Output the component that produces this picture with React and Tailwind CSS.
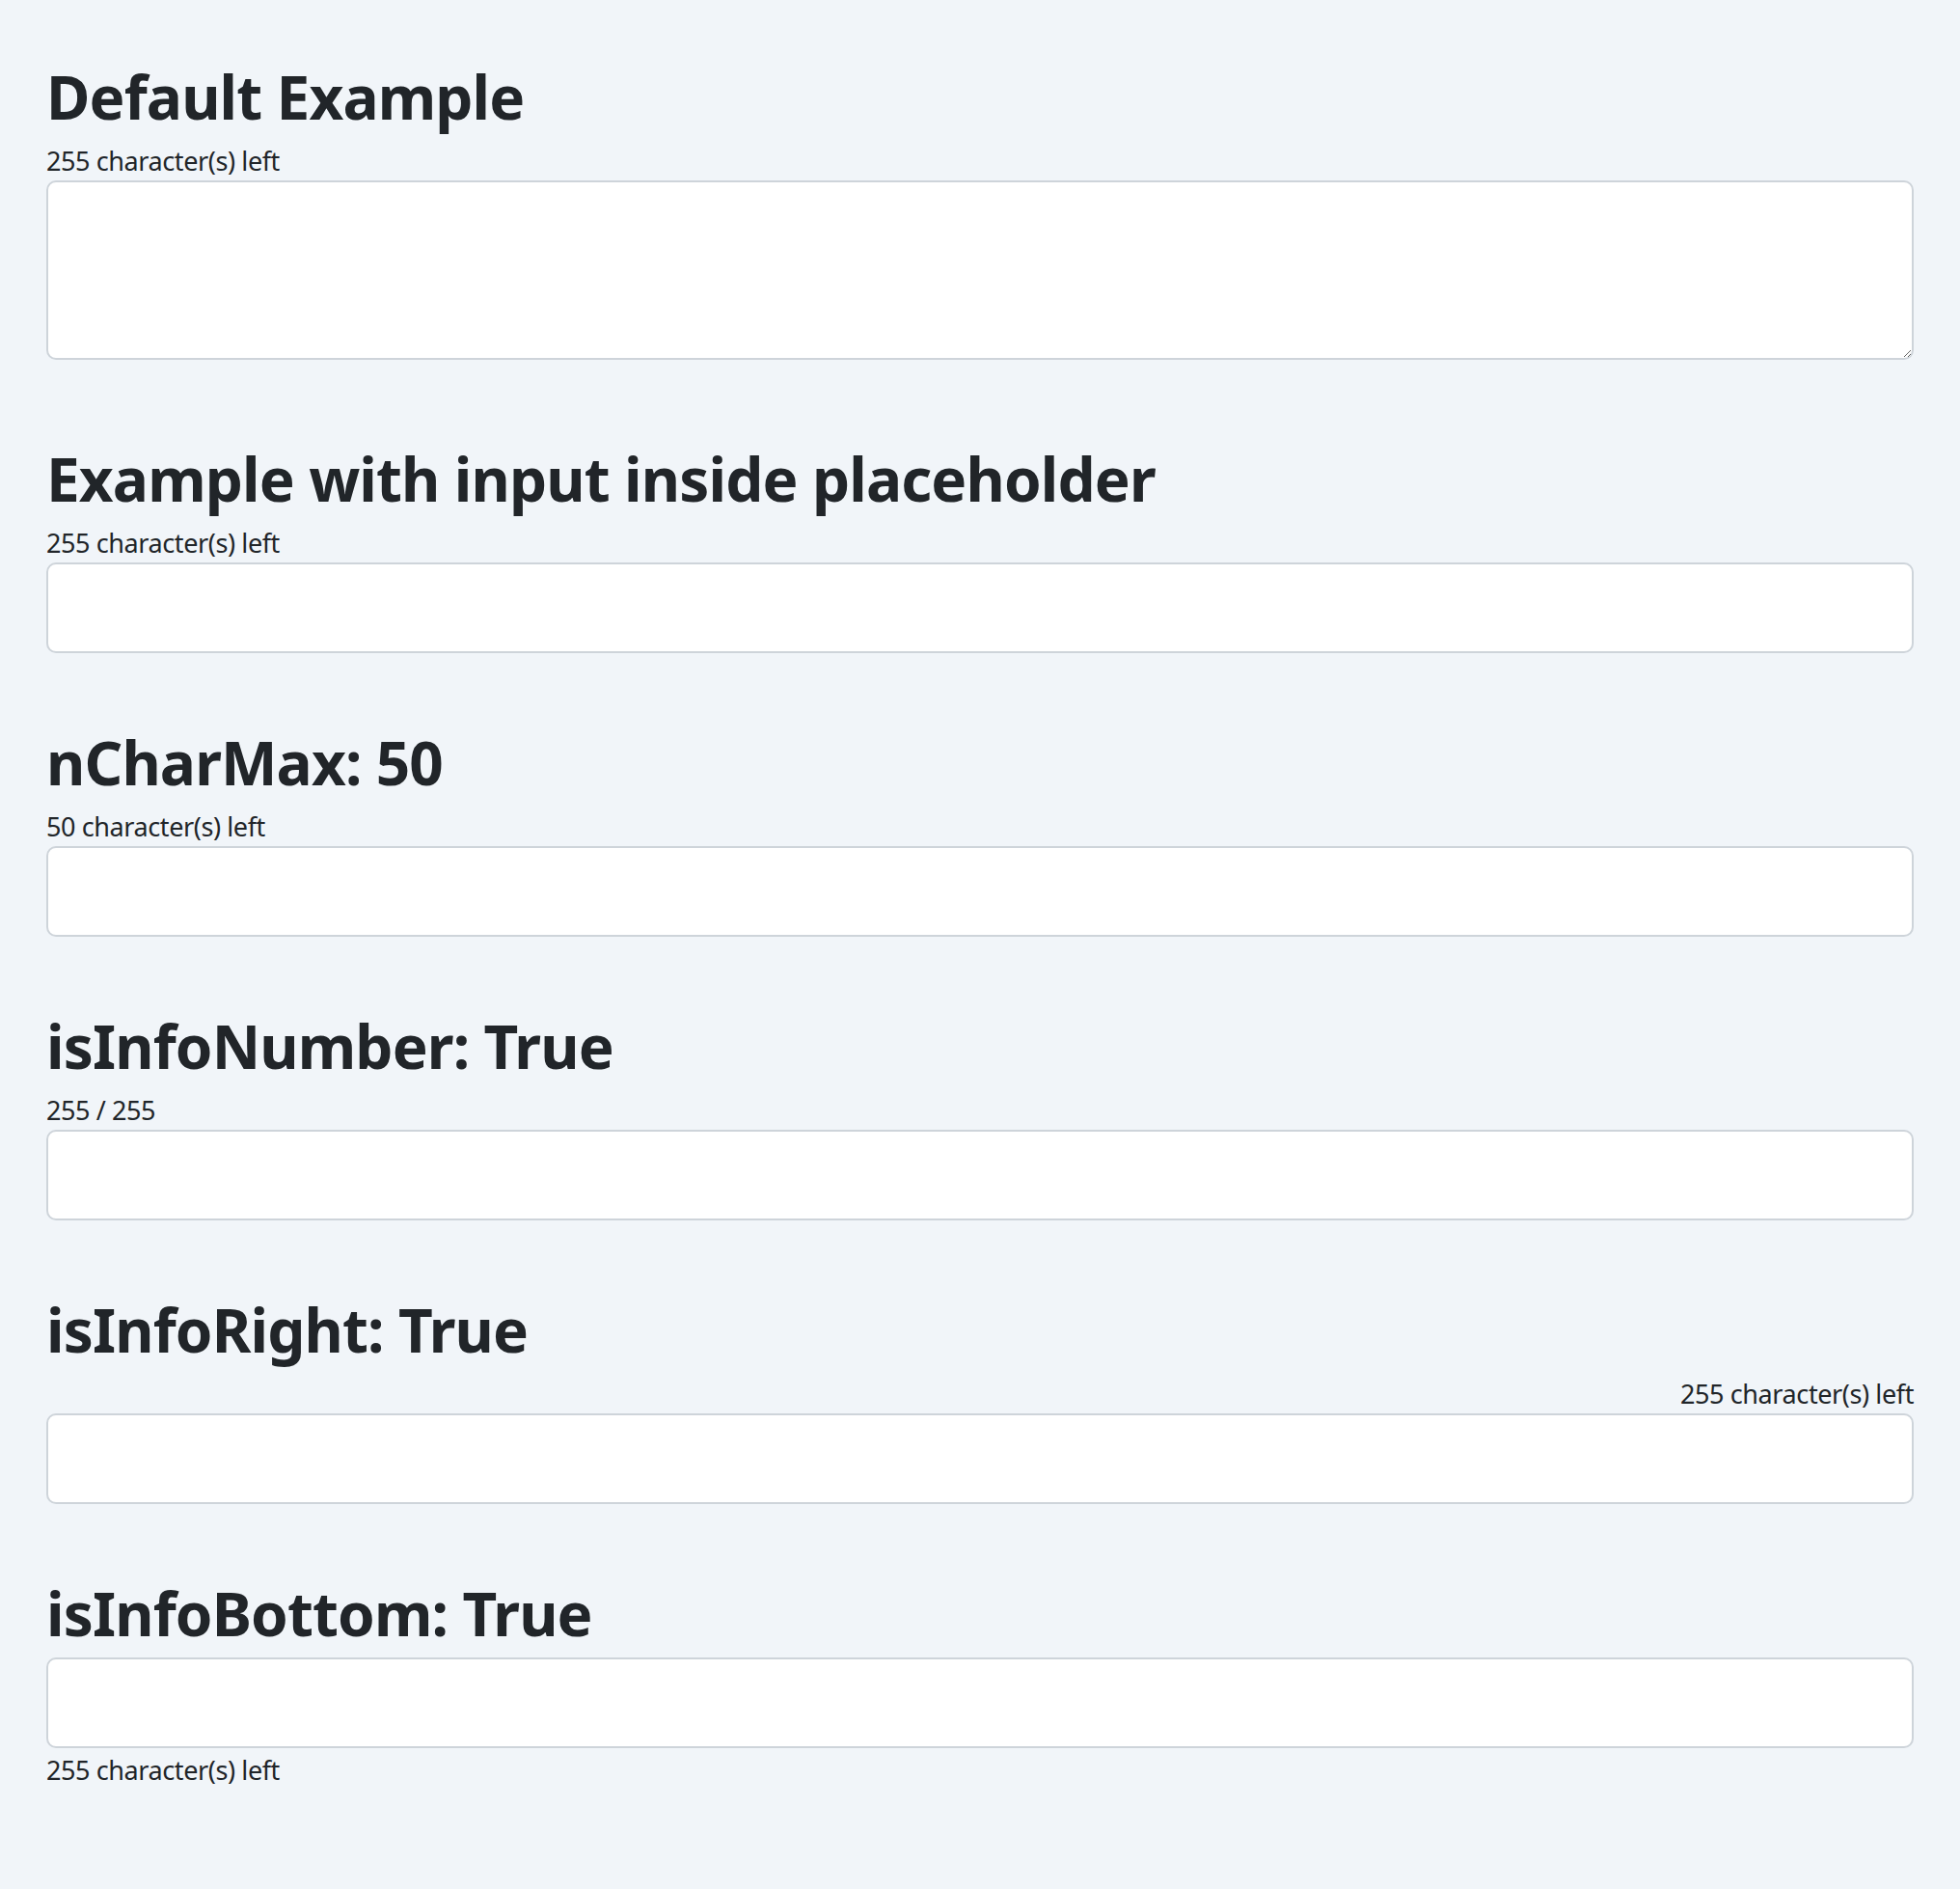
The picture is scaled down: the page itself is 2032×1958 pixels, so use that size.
import React from 'react';

const fieldClass =
  'block w-full h-[94px] px-[20px] bg-white border-2 border-[#ced4da] rounded-[10px] text-[25px] text-[#212529] outline-none';

const Counter = ({ children, align = 'left' }) => (
  <div
    className={
      align === 'right'
        ? 'text-right text-[27px] leading-[41px] tracking-[-0.4px] text-[#212529]'
        : 'text-[27px] leading-[41px] tracking-[-0.4px] text-[#212529]'
    }
  >
    {children}
  </div>
);

const Heading = ({ children }) => (
  <h2 className="text-[62px] leading-[74px] font-bold tracking-[-0.85px] text-[#212529] mb-[9px]">
    {children}
  </h2>
);

const App = () => {
  return (
    <div
      className="min-h-screen bg-[#f1f5f9] px-[48px] pt-[63px] pb-[100px]"
      style={{ fontFamily: '"Noto Sans", "Open Sans", sans-serif' }}
    >
      {/* Default */}
      <section className="mb-[86px]">
        <Heading>Default Example</Heading>
        <Counter>255 character(s) left</Counter>
        <textarea className="block w-full h-[186px] px-[20px] py-[12px] bg-white border-2 border-[#ced4da] rounded-[10px] text-[25px] outline-none" />
      </section>

      {/* Placeholder */}
      <section className="mb-[76px]">
        <Heading>Example with input inside placeholder</Heading>
        <Counter>255 character(s) left</Counter>
        <input type="text" className={fieldClass} />
      </section>

      {/* nCharMax */}
      <section className="mb-[76px]">
        <Heading>nCharMax: 50</Heading>
        <Counter>50 character(s) left</Counter>
        <input type="text" maxLength={50} className={fieldClass} />
      </section>

      {/* isInfoNumber */}
      <section className="mb-[76px]">
        <Heading>isInfoNumber: True</Heading>
        <Counter>255 / 255</Counter>
        <input type="text" className={fieldClass} />
      </section>

      {/* isInfoRight */}
      <section className="mb-[76px]">
        <Heading>isInfoRight: True</Heading>
        <Counter align="right">255 character(s) left</Counter>
        <input type="text" className={fieldClass} />
      </section>

      {/* isInfoBottom */}
      <section>
        <Heading>isInfoBottom: True</Heading>
        <input type="text" className={fieldClass} />
        <div className="mt-[2px]">
          <Counter>255 character(s) left</Counter>
        </div>
      </section>
    </div>
  );
};

export default App;
